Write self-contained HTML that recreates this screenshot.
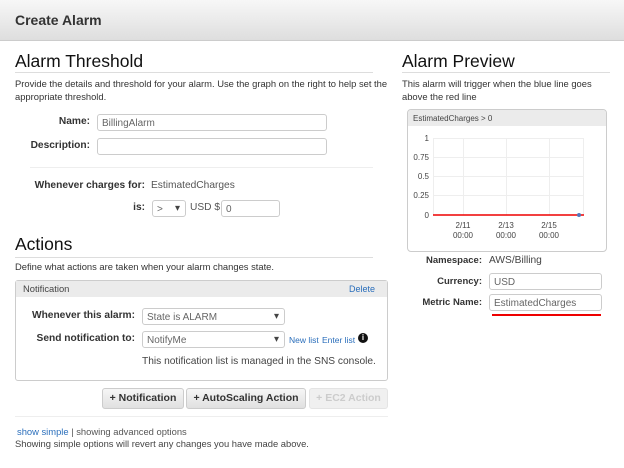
<!DOCTYPE html>
<html><head><style>
*{margin:0;padding:0;box-sizing:border-box}
body{width:624px;height:468px;background:#fff;font-family:"Liberation Sans",Arial,sans-serif;color:#333;position:relative;overflow:hidden;font-size:9.4px}
.a{position:absolute;white-space:nowrap}
.hdr{left:0;top:0;width:624px;height:41px;background:linear-gradient(#f7f7f7,#dedede);border-bottom:1px solid #ccc}
h1{font-size:17.5px;font-weight:normal;color:#111}
.rule{position:absolute;height:1px;background:#ddd}
.lbl{font-weight:bold;text-align:right;font-size:10.2px;color:#333}
.inp{position:absolute;border:1px solid #ccc;border-radius:3px;background:#fff;font-size:10px;color:#666;padding:3px 4px 1px;line-height:12px}
.sel:after{content:"▾";position:absolute;right:5px;top:2px;font-size:10px;color:#444}
.btn{position:absolute;top:388px;height:21px;border:1px solid #ccc;border-radius:3px;background:linear-gradient(#f6f6f6,#e0e0e0);font-weight:bold;font-size:10.5px;color:#333;text-align:center;line-height:19px}
.lnk{color:#2a6ebb}
</style></head><body>
<div class="a hdr"></div>
<div class="a" style="left:15px;top:12px;font-size:14px;font-weight:bold;color:#333">Create Alarm</div>

<h1 class="a" style="left:15px;top:51px">Alarm Threshold</h1>
<div class="rule" style="left:15px;top:72px;width:358px"></div>
<div class="a" style="left:15px;top:77px;line-height:13px">Provide the details and threshold for your alarm. Use the graph on the right to help set the<br>appropriate threshold.</div>
<div class="a lbl" style="left:40px;width:50px;top:116px">Name:</div>
<div class="inp" style="left:97px;top:114px;width:230px;height:17px">BillingAlarm</div>
<div class="a lbl" style="left:10px;width:80px;top:140px">Description:</div>
<div class="inp" style="left:97px;top:138px;width:230px;height:17px"></div>
<div class="rule" style="left:30px;top:167px;width:343px;background:#eee"></div>
<div class="a lbl" style="left:20px;width:125px;top:180px">Whenever charges for:</div>
<div class="a" style="left:151px;top:180px;font-size:10.2px;color:#555">EstimatedCharges</div>
<div class="a lbl" style="left:120px;width:25px;top:202px">is:</div>
<div class="inp sel" style="left:152px;top:200px;width:34px;height:17px">&gt;</div>
<div class="a" style="left:190px;top:202px;font-size:10.2px;color:#555">USD $</div>
<div class="inp" style="left:221px;top:200px;width:59px;height:17px">0</div>

<h1 class="a" style="left:15px;top:234px">Actions</h1>
<div class="rule" style="left:15px;top:257px;width:358px"></div>
<div class="a" style="left:15px;top:261px">Define what actions are taken when your alarm changes state.</div>
<div class="a" style="left:15px;top:280px;width:373px;height:101px;border:1px solid #ccc;border-radius:3px"></div>
<div class="a" style="left:16px;top:281px;width:371px;height:16px;background:#ebebeb"></div>
<div class="a" style="left:23px;top:283px;color:#444">Notification</div>
<div class="a lnk" style="left:349px;top:284px;font-size:9px">Delete</div>
<div class="a lbl" style="left:20px;width:115px;top:310px">Whenever this alarm:</div>
<div class="inp sel" style="left:142px;top:308px;width:143px;height:17px">State is ALARM</div>
<div class="a lbl" style="left:20px;width:115px;top:333px">Send notification to:</div>
<div class="inp sel" style="left:142px;top:331px;width:143px;height:17px">NotifyMe</div>
<div class="a lnk" style="left:289px;top:335px;font-size:8.5px">New list</div>
<div class="a lnk" style="left:322px;top:335px;font-size:8.5px">Enter list</div>
<div class="a" style="left:358px;top:333px;width:10px;height:10px;border-radius:50%;background:#111;color:#fff;font-size:8px;font-weight:bold;text-align:center;line-height:10px">i</div>
<div class="a" style="left:142px;top:356px;font-size:10.2px;color:#444">This notification list is managed in the SNS console.</div>
<div class="btn" style="left:102px;width:82px">+ Notification</div>
<div class="btn" style="left:186px;width:120px">+ AutoScaling Action</div>
<div class="btn" style="left:309px;width:79px;color:#ccc;background:#f0f0f0;border-color:#e4e4e4">+ EC2 Action</div>
<div class="rule" style="left:15px;top:416px;width:373px;background:#eee"></div>
<div class="a" style="left:17px;top:426px;color:#555"><span class="lnk">show simple</span> | showing advanced options</div>
<div class="a" style="left:15px;top:438px;color:#444">Showing simple options will revert any changes you have made above.</div>

<h1 class="a" style="left:402px;top:51px">Alarm Preview</h1>
<div class="rule" style="left:402px;top:72px;width:208px"></div>
<div class="a" style="left:402px;top:77px;line-height:13px">This alarm will trigger when the blue line goes<br>above the red line</div>
<div class="a" style="left:407px;top:109px;width:200px;height:143px;border:1px solid #ccc;border-radius:4px;overflow:hidden">
<div style="height:16px;background:#ebebeb;font-size:8px;color:#444;padding:4px 0 0 5px">EstimatedCharges &gt; 0</div>
<svg width="200" height="127" style="position:absolute;left:0;top:16px">
<g stroke="#eee" stroke-width="1">
<line x1="25" y1="12.5" x2="176" y2="12.5"/><line x1="25" y1="31.5" x2="176" y2="31.5"/><line x1="25" y1="50.5" x2="176" y2="50.5"/><line x1="25" y1="69.5" x2="176" y2="69.5"/>
<line x1="25.5" y1="12" x2="25.5" y2="89"/><line x1="55.5" y1="12" x2="55.5" y2="89"/><line x1="98.5" y1="12" x2="98.5" y2="89"/><line x1="141.5" y1="12" x2="141.5" y2="89"/><line x1="175.5" y1="12" x2="175.5" y2="89"/>
</g>
<line x1="25" y1="89" x2="176" y2="89" stroke="#e00" stroke-width="1.5"/>
<circle cx="171" cy="89" r="2" fill="#5577bb"/>
<g font-family="Liberation Sans,sans-serif" font-size="8" fill="#444" text-anchor="end">
<text x="21" y="15">1</text><text x="21" y="34">0.75</text><text x="21" y="53">0.5</text><text x="21" y="72">0.25</text><text x="21" y="92">0</text></g>
<g font-family="Liberation Sans,sans-serif" font-size="8" fill="#444" text-anchor="middle">
<text x="55" y="102">2/11</text><text x="55" y="112">00:00</text><text x="98" y="102">2/13</text><text x="98" y="112">00:00</text><text x="141" y="102">2/15</text><text x="141" y="112">00:00</text></g>
</svg></div>
<div class="a lbl" style="left:402px;width:80px;top:255px;font-size:9.5px">Namespace:</div>
<div class="a" style="left:489px;top:255px;font-size:10.2px;color:#444">AWS/Billing</div>
<div class="a lbl" style="left:402px;width:80px;top:276px;font-size:9.5px">Currency:</div>
<div class="inp" style="left:489px;top:273px;width:113px;height:17px">USD</div>
<div class="a lbl" style="left:402px;width:80px;top:297px;font-size:9.5px">Metric Name:</div>
<div class="inp" style="left:489px;top:294px;width:113px;height:17px">EstimatedCharges</div>
<div class="a" style="left:492px;top:314px;width:109px;height:2px;background:#e00"></div>
</body></html>
